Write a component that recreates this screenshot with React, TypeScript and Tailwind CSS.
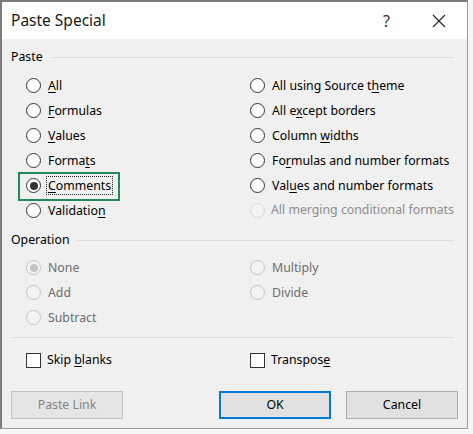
import React from "react";

const U = ({ children }: { children: React.ReactNode }) => (
  <span className="underline underline-offset-[1.5px]">{children}</span>
);

function Radio({
  label,
  checked = false,
  disabled = false,
  focus = false,
}: {
  label: React.ReactNode;
  checked?: boolean;
  disabled?: boolean;
  focus?: boolean;
}) {
  return (
    <div className="flex items-center h-[25px] whitespace-nowrap">
      <span
        className={
          "w-[15px] h-[15px] rounded-full border flex items-center justify-center shrink-0 " +
          (disabled ? "border-[#c4c4c4] bg-[#f3f3f3]" : "border-[#333333] bg-white")
        }
      >
        {checked && (
          <span
            className={
              "w-[8px] h-[8px] rounded-full " + (disabled ? "bg-[#c4c4c4]" : "bg-[#333333]")
            }
          />
        )}
      </span>
      <span
        className={
          "ml-[5px] leading-[17px] px-[1px] " +
          (focus ? "border border-dotted border-[#222]" : "border border-transparent") +
          (disabled ? " text-[#6d6d6d]" : " text-black")
        }
      >
        {label}
      </span>
    </div>
  );
}

function Check({ label }: { label: React.ReactNode }) {
  return (
    <div className="flex items-center h-[25px] whitespace-nowrap">
      <span className="w-[15px] h-[15px] border border-[#333333] bg-white shrink-0" />
      <span className="ml-[6px]">{label}</span>
    </div>
  );
}

function Group({ title }: { title: string }) {
  return (
    <div className="flex items-center h-[20px]">
      <span className="text-black">{title}</span>
      <span className="flex-1 h-px bg-[#dcdcdc] ml-[8px] mr-[4px]" />
    </div>
  );
}

export default function App() {
  return (
    <div
      className="w-[473px] h-[434px] overflow-hidden bg-[#f7f7f7]"
      style={{ fontFamily: "'Noto Sans', 'Open Sans', sans-serif" }}
    >
      <div className="w-[468px] h-[429px] border-t-2 border-l-2 border-r border-b border-t-[#7c7c7c] border-l-[#7c7c7c] border-r-[#9c9c9c] border-b-[#9c9c9c] bg-[#f0f0f0] flex flex-col text-[12.3px] text-black">
        {/* Title bar */}
        <div className="h-[37px] bg-white flex items-center shrink-0">
          <span className="ml-[9px] text-[15.5px] text-[#1a1a1a]">Paste Special</span>
          <span className="ml-auto text-[16px] text-[#333] mr-[42px]">?</span>
          <svg width="14" height="14" viewBox="0 0 14 14" className="mr-[21px]">
            <path d="M1 1 L13 13 M13 1 L1 13" stroke="#222" strokeWidth="1.1" />
          </svg>
        </div>

        <div className="flex flex-col px-[9px] pt-[8px]">
          <Group title="Paste" />
          <div className="flex pl-[15px] pt-[6px]">
            <div className="flex flex-col w-[224px]">
              <Radio label={<><U>A</U>ll</>} />
              <Radio label={<><U>F</U>ormulas</>} />
              <Radio label={<><U>V</U>alues</>} />
              <Radio label={<>Forma<U>t</U>s</>} />
              <div className="relative">
                <div className="absolute left-[-8px] top-[-1px] w-[102px] h-[29px] border-2 border-[#1f8a57]" />
                <Radio label={<><U>C</U>omments</>} checked focus />
              </div>
              <Radio label={<>Validatio<U>n</U></>} />
            </div>
            <div className="flex flex-col">
              <Radio label={<>All using Source t<U>h</U>eme</>} />
              <Radio label={<>All e<U>x</U>cept borders</>} />
              <Radio label={<>Column <U>w</U>idths</>} />
              <Radio label={<>Fo<U>r</U>mulas and number formats</>} />
              <Radio label={<>Val<U>u</U>es and number formats</>} />
              <div className="flex items-center h-[25px] whitespace-nowrap">
                <span className="w-[15px] h-[15px] rounded-full border border-[#d6d6d6] bg-[#f3f3f3] shrink-0" />
                <span className="ml-[6px] text-[#8d8d8d]">All merging conditional formats</span>
              </div>
            </div>
          </div>

          <div className="mt-[7px]">
            <Group title="Operation" />
          </div>
          <div className="flex pl-[15px] pt-[5px]">
            <div className="flex flex-col w-[224px]">
              <Radio label="None" checked disabled />
              <Radio label="Add" disabled />
              <Radio label="Subtract" disabled />
            </div>
            <div className="flex flex-col">
              <Radio label="Multiply" disabled />
              <Radio label="Divide" disabled />
            </div>
          </div>

          <div className="h-px bg-[#dcdcdc] mt-[7px] mr-[4px]" />

          <div className="flex pl-[15px] pt-[10px]">
            <div className="w-[224px]">
              <Check label={<>Skip <U>b</U>lanks</>} />
            </div>
            <Check label={<>Transpos<U>e</U></>} />
          </div>

          <div className="flex mt-[18px]">
            <button className="w-[112px] h-[28px] bg-[#e5e5e5] border border-[#c2c2c2] text-[#838383]">
              Paste Link
            </button>
            <button className="w-[112px] h-[28px] bg-[#e1e1e1] border-2 border-[#0078d7] ml-[96px] text-black">
              OK
            </button>
            <button className="w-[112px] h-[28px] bg-[#e1e1e1] border border-[#adadad] ml-[15px] text-black">
              Cancel
            </button>
          </div>
        </div>
      </div>
    </div>
  );
}
